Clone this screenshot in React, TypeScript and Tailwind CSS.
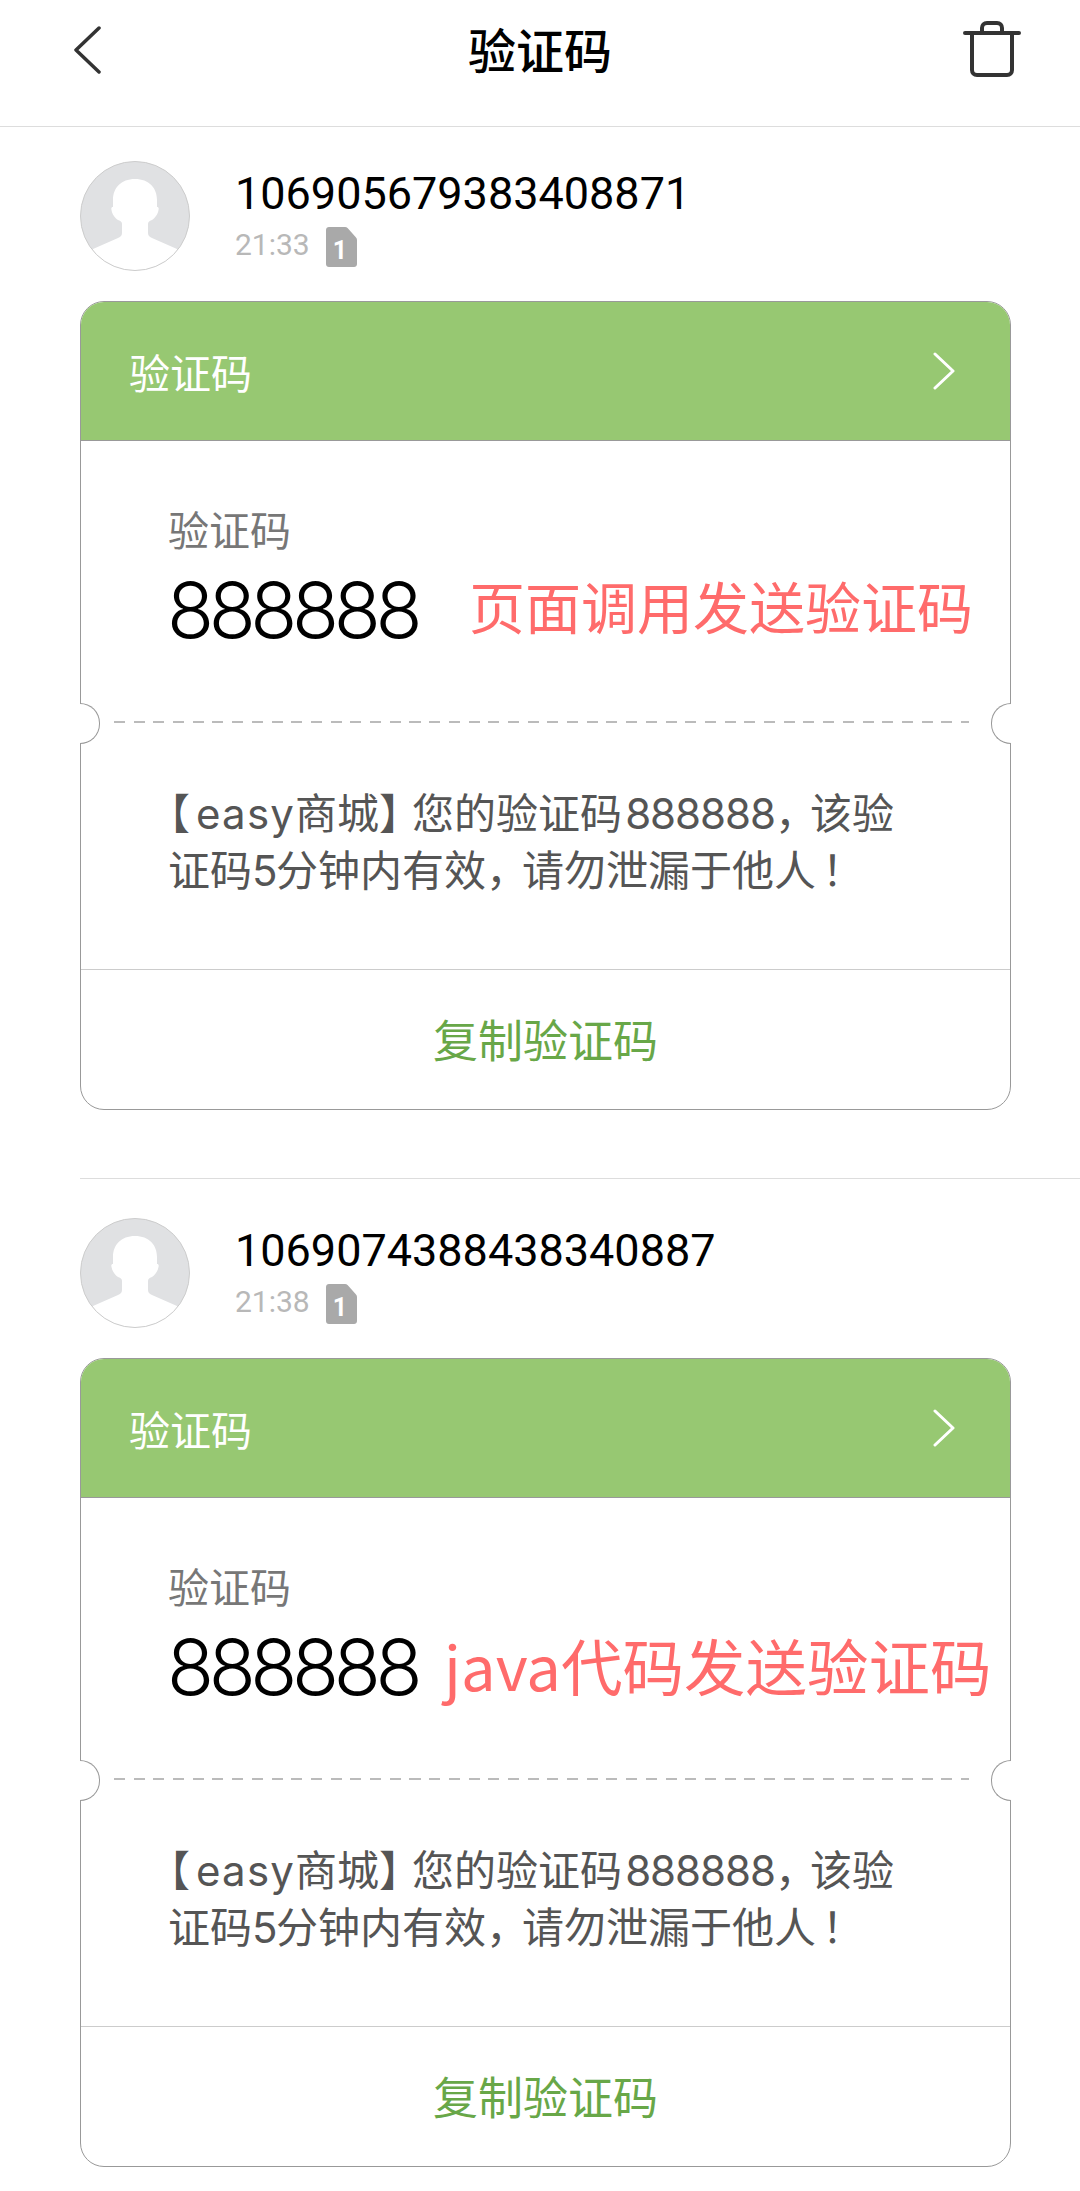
const font = { fontFamily: '"Noto Sans CJK SC", sans-serif' };
const latin = { fontFamily: 'Inter, "Noto Sans CJK SC", sans-serif' };

const messages = [
  {
    sender: "106905679383408871",
    time: "21:33",
    note: "页面调用发送验证码",
    noteClass: "ml-[52px] -mt-[10px] text-[56px]",
    rowClass: "pt-[34px]",
  },
  {
    sender: "1069074388438340887",
    time: "21:38",
    note: "java代码发送验证码",
    noteClass: "ml-[27px] -mt-[4px] text-[61.5px]",
    rowClass: "pt-[39px]",
  },
];

function Avatar() {
  return (
    <svg width="110" height="110" viewBox="0 0 110 110" className="shrink-0">
      <defs>
        <clipPath id="avatar-clip">
          <circle cx="55" cy="55" r="54.5" />
        </clipPath>
      </defs>
      <circle cx="55" cy="55" r="54.5" fill="#e0e1e3" />
      <path
        clipPath="url(#avatar-clip)"
        d="M55 18C41 18 33 27 33 39V46C31.500 46 31 47 31.500 49C32 53 35 57 38 59C41 60 42 61 42 63V72C42 75 40 76 38 77L13 88V115H97V88L72 77C70 76 68 75 68 72V63C68 61 69 60 72 59C75 57 78 53 78.500 49C79 47 78.500 46 77 46V39C77 27 69 18 55 18Z"
        fill="#fff"
      />
      <circle cx="55" cy="55" r="54.5" fill="none" stroke="#cccccc" strokeWidth="1" />
    </svg>
  );
}

function SimIcon() {
  return (
    <svg width="31" height="40" viewBox="0 0 31 40" className="ml-[16px] mt-[5px]">
      <path
        d="M3 0h16c1 0 2 .4 2.800 1.200l8 9c.8.8 1.200 1.800 1.200 2.800v24c0 1.700-1.300 3-3 3H3c-1.700 0-3-1.300-3-3V3c0-1.700 1.300-3 3-3z"
        fill="#a9a9a9"
      />
      <text x="14" y="32" fontSize="25" fontWeight="700" fill="#fff" textAnchor="middle" fontFamily="Roboto, sans-serif">
        1
      </text>
    </svg>
  );
}

function MessageCard({ note, noteClass }: { note: string; noteClass: string }) {
  return (
    <div className="relative mt-[30px] w-[931px]">
      <div className="overflow-hidden rounded-[24px] border border-[#999999]">
        <div className="flex h-[139px] items-center justify-between border-b border-[#999999] bg-[#97c872] pl-[48px] pr-[54px]">
          <span className="text-[41px] leading-none text-white">验证码</span>
          <svg width="24" height="38" viewBox="0 0 24 38" fill="none">
            <path d="M3 2l18 17L3 36" stroke="#fff" strokeWidth="3" strokeLinecap="round" strokeLinejoin="round" />
          </svg>
        </div>

        <div className="relative h-[282px] pl-[87px] pt-[63px]">
          <div className="text-[41px] leading-[48px] text-[#777777]">验证码</div>
          <div className="mt-[20px] flex h-[76px] items-center">
            <span
              className="-ml-[1px] text-[77px] font-light leading-none tracking-[-0.07em] text-black"
              style={{ fontFamily: "Inter, sans-serif" }}
            >
              888888
            </span>
            <span className={`${noteClass} whitespace-nowrap leading-none text-[#ff6b6b]`}>{note}</span>
          </div>
          <div className="absolute bottom-0 left-[33px] right-[41px] h-[2px] bg-[repeating-linear-gradient(90deg,#bbbbbb_0,#bbbbbb_11px,transparent_11px,transparent_19.7px)]" />
        </div>

        <div className="h-[246px] pl-[87px] pt-[62px] text-[42px] leading-[57px] text-[#555555]" style={latin}>
          <div className="whitespace-nowrap">
            <span className="-ml-[20px] tracking-[6px]">【</span>
            <span className="tracking-[1.2px]">easy</span>商城
            <span className="tracking-[-9px]">】</span>您的验证码
            <span className="ml-[3px] tracking-[-1px]">888888</span>
            <span className="tracking-[-7px]">，</span>该验
          </div>
          <div className="whitespace-nowrap">
            证码<span className="tracking-[-1.5px]">5</span>分钟内有效
            <span className="tracking-[-6px]">，</span>请勿泄漏于他人<span className="ml-[6px]">！</span>
          </div>
        </div>

        <div className="flex h-[140px] items-center justify-center border-t border-[#cccccc] pb-[2px] text-[45px] leading-none text-[#68a748]">
          复制验证码
        </div>
      </div>

      <div className="absolute left-0 top-[402px] h-[41px] w-[20px] rounded-r-full border border-l-0 border-[#999999] bg-white" />
      <div className="absolute right-0 top-[402px] h-[41px] w-[20px] rounded-l-full border border-r-0 border-[#999999] bg-white" />
    </div>
  );
}

export default function App() {
  return (
    <div className="h-[2191px] w-[1080px] overflow-hidden bg-white" style={font}>
      <header className="relative flex h-[127px] items-start justify-between border-b border-[#dddddd] pl-[73px] pr-[59px]">
        <svg width="28" height="48" viewBox="0 0 28 48" fill="none" className="mt-[26px]">
          <path d="M26 2L3 24l23 22" stroke="#333333" strokeWidth="3.500" strokeLinecap="round" strokeLinejoin="round" />
        </svg>
        <h1 className="absolute left-[468px] top-[24px] text-[48px] font-medium leading-none text-black">验证码</h1>
        <svg width="58" height="56" viewBox="0 0 58 56" fill="none" className="mt-[21px]">
          <path
            d="M2 12h54M9 12v37c0 3 2 5 5 5h30c3 0 5-2 5-5V12M19 12V7c0-3 2-5 5-5h10c3 0 5 2 5 5v5"
            stroke="#333333"
            strokeWidth="4"
            strokeLinecap="round"
            strokeLinejoin="round"
          />
        </svg>
      </header>

      <main className="pl-[80px]">
        {messages.map((m, i) => (
          <section
            key={m.sender}
            className={`${m.rowClass} ${i === 0 ? "border-b border-[#dddddd] pb-[68px]" : ""}`}
          >
            <div className="flex">
              <Avatar />
              <div className="ml-[45px] pt-[7px]">
                <div
                  className="text-[45px] leading-[52px] text-black"
                  style={{ fontFamily: "Roboto, sans-serif" }}
                >
                  {m.sender}
                </div>
                <div className="mt-[2px] flex">
                  <span
                    className="pt-[1px] text-[30px] leading-[44px] text-[#b8b8b8]"
                    style={{ fontFamily: "Roboto, sans-serif" }}
                  >
                    {m.time}
                  </span>
                  <SimIcon />
                </div>
              </div>
            </div>
            <MessageCard note={m.note} noteClass={m.noteClass} />
          </section>
        ))}
      </main>
    </div>
  );
}
